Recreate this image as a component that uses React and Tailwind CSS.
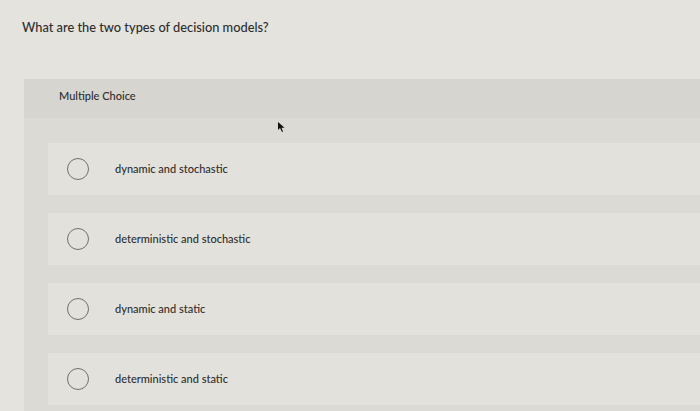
import React from 'react';

const options = [
  'dynamic and stochastic',
  'deterministic and stochastic',
  'dynamic and static',
  'deterministic and static',
];

const App = () => {
  return (
    <div className="relative w-[700px] h-[411px] overflow-hidden bg-[#e5e3de]" style={{ fontFamily: 'Lato, "Open Sans", sans-serif' }}>
      <div className="pl-[22px] pt-[18px] h-[79px]">
        <p className="text-[12.8px] leading-[18px] font-medium text-[#2e2e2e]">What are the two types of decision models?</p>
      </div>
      <div className="ml-[24px] bg-[#dcdad4] h-[332px]">
        <div className="h-[39px] bg-[#d7d5cf] pl-[35px] pt-[10px]">
          <p className="text-[11px] leading-[14px] font-medium text-[#2e2e2e]">Multiple Choice</p>
        </div>
        <div className="flex flex-col gap-[18px] pt-[25px] pl-[24px]">
          {options.map((o) => (
            <div key={o} className="h-[52px] bg-[#e3e1dc] flex items-center">
              <span className="ml-[19px] w-[22px] h-[22px] rounded-full border-[1.5px] border-[#707070]" />
              <span className="ml-[26px] text-[11px] font-medium text-[#2e2e2e]">{o}</span>
            </div>
          ))}
        </div>
      </div>
      {/* mouse pointer caught in the shot */}
      <svg className="absolute left-[277px] top-[121px]" width="9" height="12" viewBox="0 0 9 12">
        <path d="M1 1 L1 9 L3 7 L5 11 L6 10.5 L4.5 6.8 L7.5 6.8 Z" fill="#111" />
      </svg>
    </div>
  );
};

export default App;
